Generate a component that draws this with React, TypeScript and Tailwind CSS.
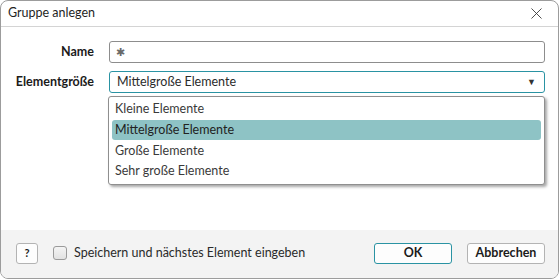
import { X } from 'lucide-react';

const items = ['Kleine Elemente', 'Mittelgroße Elemente', 'Große Elemente', 'Sehr große Elemente'];

export default function App() {
  return (
    <div
      className="w-[560px] h-[280px] bg-white text-[12.5px] text-[#1b1b1b]"
      style={{ fontFamily: '"Segoe UI", Lato, "Noto Sans", sans-serif' }}
    >
      <div className="relative w-[559px] h-[279px] border border-[#9c9c9c] rounded-[8px] overflow-hidden flex flex-col bg-white">
        {/* Title bar */}
        <div className="h-[26px] flex items-center justify-between pl-[7px] pr-[12px] border-b border-[#d4d4d4]">
          <span className="text-[12.5px] text-[#1f1f1f]">Gruppe anlegen</span>
          <X className="w-[19px] h-[19px] text-[#333]" strokeWidth={1.1} />
        </div>

        {/* Form */}
        <div className="flex-1 pt-[14px] pr-[13px] flex flex-col gap-[8px]">
          <div className="flex items-center">
            <div className="w-[93px] text-right font-bold">Name</div>
            <div className="ml-[15px] flex-1 h-[22px] border border-[#8d8d8d] rounded-[3px] bg-white flex items-center px-[6px] text-[#6a6a6a] text-[11px]">
              ✱
            </div>
          </div>
          <div className="relative flex items-center">
            <div className="w-[93px] text-right font-bold">Elementgröße</div>
            <div className="ml-[15px] flex-1 h-[22px] border border-[#2a93a3] rounded-[3px] bg-white flex items-center justify-between pl-[7px] pr-[8px] text-[#2b2b2b]">
              <span>Mittelgroße Elemente</span>
              <span className="text-[9px] text-[#333]">▼</span>
            </div>

            {/* Dropdown list */}
            <div className="absolute left-[107px] right-0 top-[25px] h-[89px] bg-white border border-[#8f8f8f] rounded-[3px] shadow-[2px_2px_3px_rgba(0,0,0,0.35)] py-[2px] px-[3px] flex flex-col z-10">
              {items.map((item) => (
                <div
                  key={item}
                  className={
                    item === 'Mittelgroße Elemente'
                      ? 'h-[20px] my-[0.5px] flex items-center px-[3px] rounded-[3px] bg-[#8ec3c5] text-[#222]'
                      : 'h-[21px] flex items-center px-[3px] text-[#3a3a3a]'
                  }
                >
                  {item}
                </div>
              ))}
            </div>
          </div>
        </div>

        {/* Footer */}
        <div className="h-[48px] bg-[#f3f3f3] flex items-center pl-[15px] pr-[13px] pb-[2px]">
          <div className="w-[22px] h-[21px] border border-[#b3b3b3] rounded-[3px] bg-[#fdfdfd] flex items-center justify-center font-bold text-[11px]">
            ?
          </div>
          <div className="ml-[15px] w-[14px] h-[14px] border border-[#9a9a9a] rounded-[3px] bg-gradient-to-b from-[#f4f4f4] to-[#e2e2e2]" />
          <span className="ml-[7px] text-[#2a2a2a]">Speichern und nächstes Element eingeben</span>
          <div className="ml-auto flex gap-[15px]">
            <div className="w-[78px] h-[21px] border border-[#2a93a3] rounded-[3px] bg-[#fdfdfd] flex items-center justify-center font-bold">
              OK
            </div>
            <div className="w-[78px] h-[21px] border border-[#b3b3b3] rounded-[3px] bg-[#fdfdfd] flex items-center justify-center font-bold">
              Abbrechen
            </div>
          </div>
        </div>
      </div>
    </div>
  );
}
